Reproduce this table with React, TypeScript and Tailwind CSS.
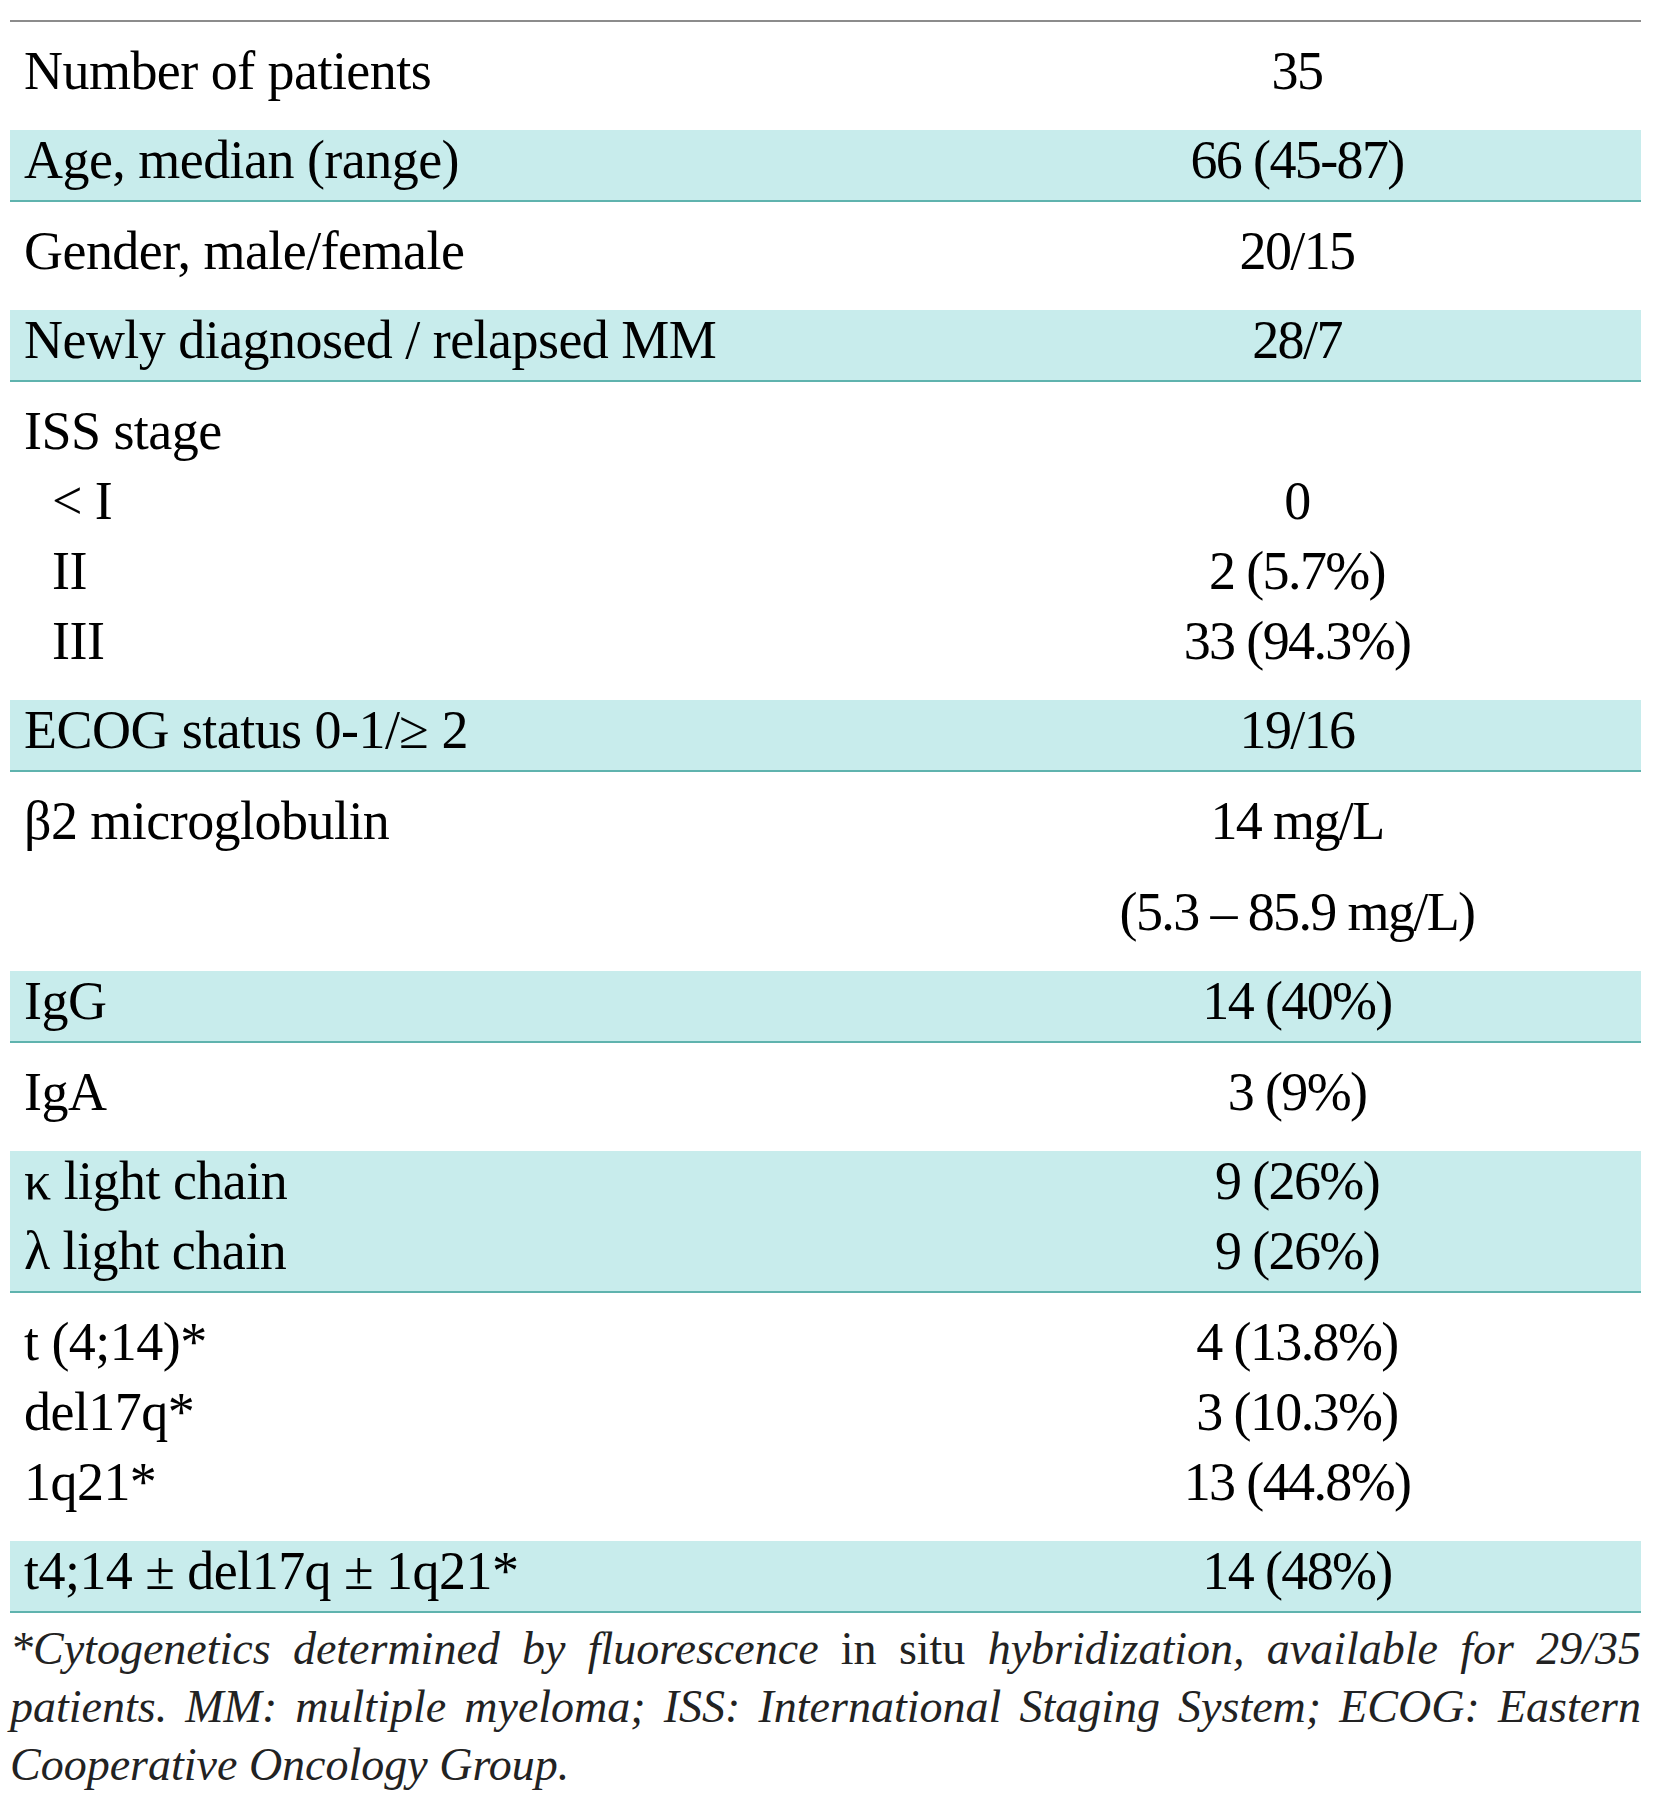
import { FC, ReactNode } from "react";

type Row = {
  band?: boolean;
  labels: ReactNode[];
  values: ReactNode[];
  indent?: number[];
  split?: boolean;
};

const rows: Row[] = [
  { labels: ["Number of patients"], values: ["35"] },
  { band: true, labels: ["Age, median (range)"], values: ["66 (45-87)"] },
  { labels: ["Gender, male/female"], values: ["20/15"] },
  { band: true, labels: ["Newly diagnosed / relapsed MM"], values: ["28/7"] },
  {
    labels: ["ISS stage", "< I", "II", "III"],
    values: ["", "0", "2 (5.7%)", "33 (94.3%)"],
    indent: [1, 2, 3],
  },
  { band: true, labels: ["ECOG status 0-1/≥ 2"], values: ["19/16"] },
  {
    labels: ["β2 microglobulin"],
    values: ["14 mg/L", "(5.3 – 85.9 mg/L)"],
    split: true,
  },
  { band: true, labels: ["IgG"], values: ["14 (40%)"] },
  { labels: ["IgA"], values: ["3 (9%)"] },
  {
    band: true,
    labels: ["κ light chain", "λ light chain"],
    values: ["9 (26%)", "9 (26%)"],
  },
  {
    labels: ["t (4;14)*", "del17q*", "1q21*"],
    values: ["4 (13.8%)", "3 (10.3%)", "13 (44.8%)"],
  },
  { band: true, labels: ["t4;14 ± del17q ± 1q21*"], values: ["14 (48%)"] },
];

const TableRow: FC<{ row: Row }> = ({ row }) => {
  // shaded rows sit their text a little high, white rows get extra space
  const box = row.band
    ? "bg-[#c8ecec] border-b-2 border-[#5fb3ae] pb-[5px]"
    : "pt-[14px] pb-[24px]";
  const shift = row.band ? "-mt-[5px]" : "";
  return (
    <div className={`grid grid-cols-[943px_1fr] ${box}`}>
      <div className={`pl-[14px] tracking-[-0.01em] ${shift}`}>
        {row.labels.map((l, i) => (
          <div
            key={i}
            className={row.indent?.includes(i) ? "pl-[28px]" : ""}
          >
            {l}
          </div>
        ))}
      </div>
      <div
        className={`text-center tracking-[-0.03em] ${shift} ${row.split ? "flex flex-col gap-[21px]" : ""}`}
      >
        {row.values.map((v, i) => (
          <div key={i} className="h-[70px]">
            {v}
          </div>
        ))}
      </div>
    </div>
  );
};

export default function App() {
  return (
    <div className="w-[1656px] h-[1800px] bg-white pl-[10px] pr-[15px] pt-[20px] text-black">
      <div className="border-t-2 border-[#8c8c8c] font-['Liberation_Serif',serif] text-[54px] leading-[70px]">
        {rows.map((r, i) => (
          <TableRow key={i} row={r} />
        ))}
      </div>
      <p className="mt-[7px] text-justify font-['Liberation_Serif',serif] text-[46px] leading-[58px] text-[#222]">
        <em>*Cytogenetics determined by fluorescence</em> in situ{" "}
        <em>hybridization, available for 29/35</em>{" "}
        <em>
          patients. MM: multiple myeloma; ISS: International Staging System;
          ECOG: Eastern Cooperative Oncology Group.
        </em>
      </p>
    </div>
  );
}
